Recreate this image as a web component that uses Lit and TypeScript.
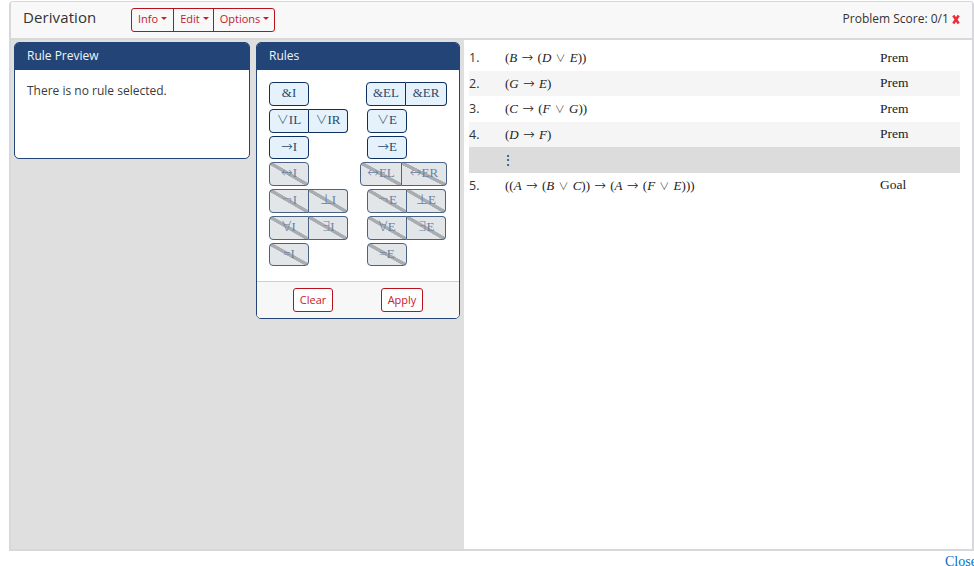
import { LitElement, html, css } from "lit";
import { customElement } from "lit/decorators.js";

const lines = [
  ["1.", "(B → (D ∨ E))", "Prem", ""],
  ["2.", "(G → E)", "Prem", "alt"],
  ["3.", "(C → (F ∨ G))", "Prem", ""],
  ["4.", "(D → F)", "Prem", "alt"],
  ["", "⋮", "", "gap"],
  ["5.", "((A → (B ∨ C)) → (A → (F ∨ E)))", "Goal", ""],
];

type Btn = [string, string];
type Row = { off?: boolean; short?: boolean; left: Btn[]; right: Btn[]; shift: string };
const rows: Row[] = [
  { left: [["&I", "w40"]], right: [["&EL", "w40"], ["&ER", "w41"]], shift: "s0" },
  { left: [["∨IL", "w40"], ["∨IR", "w39"]], right: [["∨E", "w40"]], shift: "s1" },
  { short: true, left: [["→I", "w40"]], right: [["→E", "w40"]], shift: "s1" },
  { off: true, left: [["↔I", "w40"]], right: [["↔EL", "w42"], ["↔ER", "w45"]], shift: "s2" },
  { off: true, left: [["¬I", "w40"], ["⊥I", "w39"]], right: [["¬E", "w40"], ["⊥E", "w39"]], shift: "s1" },
  { off: true, left: [["∀I", "w40"], ["∃I", "w39"]], right: [["∀E", "w40"], ["∃E", "w39"]], shift: "s1" },
  { off: true, short: true, left: [["=I", "w40"]], right: [["=E", "w40"]], shift: "s1" },
];

@customElement("app-root")
export class AppRoot extends LitElement {
  static styles = css`
    :host { display: block; width: 974px; height: 566px; overflow: hidden; background: #fff;
      font-family: "Open Sans", "Noto Sans", sans-serif; color: #333; }
    .modal { box-sizing: border-box; margin: 1px 0 0 9px; height: 550px; border: 2px solid #d6d8dc; border-top-width: 1px;
      border-radius: 4px 4px 0 0; display: flex; flex-direction: column; overflow: hidden; }
    .bar { height: 38px; flex: none; box-sizing: border-box; background: #f8f8f8; border-bottom: 2px solid #d9d9d9;
      display: flex; align-items: center; padding: 0 12px 5px 12px; }
    .title { font-size: 15px; color: #333; letter-spacing: .1px; width: 108px; margin-bottom: 2px; }
    .menu { display: flex; height: 24px; box-sizing: border-box; border: 1px solid #b8111b; border-radius: 3px; margin-top: 4px; }
    .menu span { display: flex; align-items: center; font-size: 11px; color: #c0202c; padding: 0 5px 2px 6px; border-left: 1px solid #b8111b; }
    .menu span:first-child { border-left: 0; padding-right: 6px; }
    .menu span:nth-child(2) { padding-right: 4px; }
    .menu i { display: inline-block; margin-left: 3px; margin-bottom: 1px; border: 3.5px solid transparent; border-top-color: #c0202c; border-bottom: 0; }
    .score { margin-left: auto; font-size: 12px; color: #333; margin-top: 1px; }
    .x { width: 8px; height: 11px; display: inline-block; vertical-align: -2px; }
    .main { flex: 1; display: flex; min-height: 0; }
    .side { width: 453px; flex: none; background: #dfdfdf; display: flex; gap: 6px; padding: 2px 0 0 3px; box-sizing: border-box; align-items: flex-start; }
    .card { box-sizing: border-box; background: #fff; border: 1px solid #234476; border-radius: 5px; overflow: hidden; }
    .preview { width: 236px; height: 117px; }
    .rules { width: 204px; height: 277px; display: flex; flex-direction: column; }
    .head { height: 27px; box-sizing: border-box; background: #234476; color: #f1f4f8; font-size: 12px; padding: 0 12px 3px; display: flex; align-items: center; flex: none; }
    .pbody { padding: 12px; font-size: 12px; line-height: 17px; color: #3a3a3a; }
    .rbody { flex: 1; padding: 12px 12px 0; display: flex; flex-direction: column; gap: 3px; }
    .row { display: flex; height: 24px; }
    .short { height: 23px; }
    .col1 { width: 79px; display: flex; }
    .s0 { margin-left: 18px; } .s1 { margin-left: 19px; } .s2 { margin-left: 12px; }
    .col2 { display: flex; }
    .b { box-sizing: border-box; height: 100%; padding-bottom: 2px; border: 1px solid #0f2f5f; border-left-width: 0; background: #e5f2fb; color: #2c4868;
      font-family: "Liberation Serif", serif; font-size: 13px; line-height: 14px; display: flex; align-items: center; justify-content: center; white-space: nowrap; }
    .b:first-child { border-left-width: 1px; border-radius: 4px 0 0 4px; }
    .b:last-child { border-radius: 0 4px 4px 0; }
    .b:first-child:last-child { border-radius: 4px; }
    .w39 { width: 39px; } .w40 { width: 40px; } .w41 { width: 41px; } .w42 { width: 42px; } .w45 { width: 45px; }
    .off .b { border-color: #4a6385; color: #6d829c;
      background: linear-gradient(to top right, transparent calc(50% - 2px), #a9adb1 calc(50% - 1.5px), #a9adb1 calc(50% + 1.5px), transparent calc(50% + 2px)), #e2e6e9; }
    .sym { font-family: "DejaVu Sans", sans-serif; font-weight: 200; font-size: 14px; line-height: 0; }
    .or { font-family: "Noto Sans CJK JP", sans-serif; font-weight: 300; font-size: 10px; line-height: 0; }
    .b .or { font-size: 12px; }
    .dots { font-family: "DejaVu Sans", sans-serif; font-weight: 200; font-size: 12px; margin-left: -3px; line-height: 0; }
    .foot { height: 37px; flex: none; box-sizing: border-box; background: #f7f7f7; border-top: 1px solid #cfcfcf; display: flex; padding: 6px 0 0 36px; }
    .act { box-sizing: border-box; height: 24px; padding-bottom: 2px; background: #fff; border: 1px solid #b8111b; border-radius: 3px; color: #c8202e; font-size: 11px; display: flex; align-items: center; justify-content: center; }
    .clear { width: 40px; margin-right: 48px; } .apply { width: 42px; }
    .proof { flex: 1; background: #fff; padding: 5px 12px 0 5px; }
    .line { display: flex; align-items: center; height: 25.5px; }
    .alt { background: #f5f5f5; } .gap { background: #dcdcdc; }
    .n { width: 36px; font-size: 12.5px; color: #333; }
    .f { width: 375px; font-family: "Liberation Serif", serif; font-size: 13px; line-height: 15px; word-spacing: 1px; color: #222; white-space: nowrap; }
    .f em { font-style: italic; }
    .j { font-family: "Liberation Serif", serif; font-size: 13.5px; color: #222; }
    .close { height: 15px; padding: 3px 0 0 945px; font-family: "Liberation Serif", serif; font-size: 14px; color: #0a6ec0; white-space: nowrap; overflow: hidden; line-height: 15px; }
  `;

  private tokens(s: string, italic: boolean) {
    return [...s].map((c) => {
      if (c === "∨") return html`<span class="or">${c}</span>`;
      if (c === "⋮") return html`<span class="dots">${c}</span>`;
      if (/[→↔¬⊥∀∃]/.test(c)) return html`<span class="sym">${c}</span>`;
      if (italic && /[A-Z]/.test(c)) return html`<em>${c}</em>`;
      return c;
    });
  }

  private btns(list: Btn[]) {
    return list.map(([t, w]) => html`<div class="b ${w}"><span>${this.tokens(t, false)}</span></div>`);
  }

  render() {
    return html`
      <div class="modal">
        <div class="bar">
          <div class="title">Derivation</div>
          <div class="menu">
            <span>Info<i></i></span><span>Edit<i></i></span><span>Options<i></i></span>
          </div>
          <div class="score">Problem Score: 0/1
            <svg class="x" viewBox="1.5 0 8 11"><path d="M2.8 1.5 L8.2 9.5 M8.2 1.5 L2.8 9.5" stroke="#e8303a" stroke-width="2.6" fill="none"/></svg>
          </div>
        </div>
        <div class="main">
          <div class="side">
            <div class="card preview">
              <div class="head">Rule Preview</div>
              <div class="pbody">There is no rule selected.</div>
            </div>
            <div class="card rules">
              <div class="head">Rules</div>
              <div class="rbody">
                ${rows.map((r) => html`
                  <div class="row ${r.off ? "off" : ""} ${r.short ? "short" : ""}">
                    <div class="col1">${this.btns(r.left)}</div>
                    <div class="col2 ${r.shift}">${this.btns(r.right)}</div>
                  </div>`)}
              </div>
              <div class="foot">
                <div class="act clear">Clear</div>
                <div class="act apply">Apply</div>
              </div>
            </div>
          </div>
          <div class="proof">
            ${lines.map(([n, f, j, c]) => html`
              <div class="line ${c}">
                <div class="n">${n}</div>
                <div class="f">${this.tokens(f, true)}</div>
                <div class="j">${j}</div>
              </div>`)}
          </div>
        </div>
      </div>
      <div class="close">Close</div>
    `;
  }
}
